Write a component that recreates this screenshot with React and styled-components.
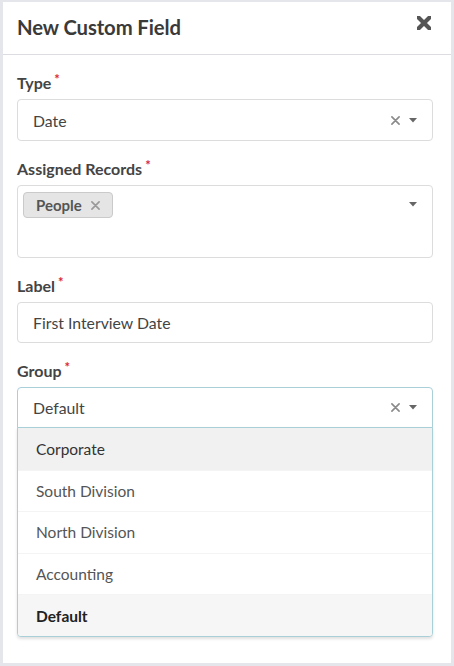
import React from 'react';
import styled, { createGlobalStyle } from 'styled-components';

const GlobalStyle = createGlobalStyle`
	html, body {
		margin: 0;
		padding: 0;
		background: #e4e6ec;
	}
	* {
		box-sizing: border-box;
	}
	body {
		font-family: Lato, "Open Sans", "Liberation Sans", sans-serif;
		color: #444;
	}
`

const Frame = styled.div`
	width: 454px;
	height: 666px;
	padding: 2px 3px 3px 3px;
	background: #e4e6ec;
`

const Panel = styled.div`
	height: 100%;
	background: #fff;
	display: flex;
	flex-direction: column;
`

const Header = styled.div`
	height: 53px;
	display: flex;
	align-items: center;
	justify-content: space-between;
	padding: 0 20px 2px 14px;
	border-bottom: 1px solid #dcdde0;
`

const Title = styled.h1`
	margin: 0;
	font-size: 20.3px;
	font-weight: 700;
	color: #3a3a3a;
	letter-spacing: -0.1px;
`

const CloseButton = styled.button`
	border: none;
	background: none;
	padding: 0;
	margin-top: -8px;
	display: flex;
	color: #555;
	cursor: pointer;
`

const Body = styled.div`
	padding: 18px 18px 0 14px;
`

const Field = styled.div`
	position: relative;
	margin-bottom: 18px;
`

const Label = styled.div`
	font-size: 16px;
	font-weight: 700;
	line-height: 20px;
	color: #444;
	margin-bottom: 6px;
`

const Required = styled.span`
	color: #d9263a;
	font-size: 13px;
	vertical-align: top;
	position: relative;
	top: -4px;
	margin-left: 3px;
`

const Box = styled.div`
	display: flex;
	align-items: ${p => (p.$multi ? 'flex-start' : 'center')};
	height: ${p => p.$height || 42}px;
	padding: ${p => (p.$multi ? '6px 15px 0 5px' : '0 15px 0 15px')};
	border: 1px solid ${p => (p.$focused ? '#a9cfd9' : '#dcdcdc')};
	border-radius: ${p => (p.$open ? '4px 4px 0 0' : '4px')};
	background: #fff;
	font-size: 15.8px;
	color: #444;
`

const Value = styled.div`
	flex: 1;
`

const Tags = styled.div`
	flex: 1;
	display: flex;
	gap: 6px;
`

const Tag = styled.div`
	display: flex;
	align-items: center;
	gap: 9px;
	height: 26px;
	padding: 0 12px;
	background: #e5e5e5;
	border: 1px solid #cacaca;
	border-radius: 4px;
	font-size: 15px;
	font-weight: 700;
	color: #555;
`

const Controls = styled.div`
	display: flex;
	align-items: center;
	gap: 9px;
	color: #888;
	margin-top: ${p => (p.$multi ? '10px' : '0')};
`

const Menu = styled.div`
	position: absolute;
	left: 0;
	right: 0;
	top: 100%;
	margin-top: -1px;
	border: 1px solid #a9cfd9;
	border-radius: 0 0 4px 4px;
	background: #fff;
	box-shadow: 0 2px 3px rgba(0, 0, 0, 0.12);
	overflow: hidden;
`

const Option = styled.div`
	height: 41.6px;
	display: flex;
	align-items: center;
	padding: 0 18px;
	font-size: 15.5px;
	font-weight: ${p => (p.$selected ? 700 : 400)};
	color: ${p => (p.$selected ? '#222' : p.$hover ? '#333' : '#555')};
	background: ${p => (p.$selected ? '#f6f6f6' : p.$hover ? '#f1f1f1' : '#fff')};
	border-top: 1px solid #f4f4f4;

	&:first-child {
		border-top: none;
	}
`

const XIcon = ({ size = 10, width = 2, color = 'currentColor' }) => (
	<svg width={size} height={size} viewBox="0 0 10 10">
		<path d="M1 1 L9 9 M9 1 L1 9" stroke={color} strokeWidth={width} strokeLinecap="round" />
	</svg>
)

const Caret = () => (
	<svg width="8" height="5" viewBox="0 0 8 5">
		<path d="M0 0 H8 L4 4.5 Z" fill="#666" />
	</svg>
)

const groups = ['Corporate', 'South Division', 'North Division', 'Accounting', 'Default']

const App = () => {
	return (
		<>
			<GlobalStyle />
			<Frame>
				<Panel>
					<Header>
						<Title>New Custom Field</Title>
						<CloseButton>
							<XIcon size={14} width={3} color="#555" />
						</CloseButton>
					</Header>
					<Body>
						<Field>
							<Label>Type<Required>*</Required></Label>
							<Box>
								<Value>Date</Value>
								<Controls>
									<XIcon size={9} width={1.8} color="#8a8a8a" />
									<Caret />
								</Controls>
							</Box>
						</Field>

						<Field>
							<Label>Assigned Records<Required>*</Required></Label>
							<Box $multi $height={73}>
								<Tags>
									<Tag>
										People
										<XIcon size={9} width={1.8} color="#999" />
									</Tag>
								</Tags>
								<Controls $multi>
									<Caret />
								</Controls>
							</Box>
						</Field>

						<Field>
							<Label>Label<Required>*</Required></Label>
							<Box $height={41}>
								<Value>First Interview Date</Value>
							</Box>
						</Field>

						<Field>
							<Label>Group<Required>*</Required></Label>
							<Box $focused $open $height={41}>
								<Value>Default</Value>
								<Controls>
									<XIcon size={9} width={1.8} color="#8a8a8a" />
									<Caret />
								</Controls>
							</Box>
							<Menu>
								{groups.map((g, i) => (
									<Option key={g} $hover={i === 0} $selected={g === 'Default'}>
										{g}
									</Option>
								))}
							</Menu>
						</Field>
					</Body>
				</Panel>
			</Frame>
		</>
	)
}

export default App
